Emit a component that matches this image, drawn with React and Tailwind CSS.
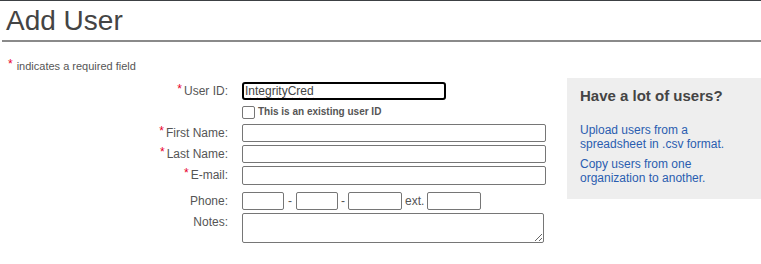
import React from 'react'

const Req = () => <span className="text-[#e8002a] text-[12px] mr-[2px] relative top-[-2px]">*</span>

const Field = ({ label, required, children, className = '' }) => (
  <>
    <div className={`text-right text-[12px] text-[#555] leading-[18px] ${className}`}>
      {required && <Req />}
      {label}
    </div>
    <div className={className}>{children}</div>
  </>
)

const inputCls =
  'block h-[18px] border border-[#767676] rounded-[2px] bg-white text-[12px] px-[1px] outline-none'

export default function App() {
  return (
    <div className="w-[761px] h-[264px] bg-white border-t border-[#3c4043] font-['Liberation_Sans',Arial,sans-serif] text-[#444] overflow-hidden">
      <h1 className="text-[28px] leading-[34px] pl-[4px] pt-[3px] text-[#444] border-b-2 border-[#8a8a8a] ml-[2px] pb-[2px]">
        Add User
      </h1>

      <div className="flex mt-[17px]">
        <div className="w-[567px]">
          <p className="text-[11px] text-[#555] pl-[8px] leading-[14px]">
            <span className="text-[#e8002a] text-[12px] relative top-[-2px] mr-[4px]">*</span>
            indicates a required field
          </p>

          <div className="grid grid-cols-[228px_auto] gap-x-[14px] mt-[9px] items-start">
            <Field label="User ID:" required>
              <input
                defaultValue="IntegrityCred"
                spellCheck
                className="block w-[204px] h-[18px] border-2 border-black rounded-[3px] text-[12px] px-[1px] outline-none underline decoration-wavy decoration-[#e53935] decoration-[1px] underline-offset-2"
              />
            </Field>

            <div />
            <label className="flex items-center gap-[3px] mt-[5px] text-[10px] font-bold text-[#555] leading-[14px]">
              <span className="inline-block w-[13px] h-[13px] border border-[#767676] rounded-[2px] bg-white" />
              This is an existing user ID
            </label>

            <Field label="First Name:" required className="mt-[5px]">
              <input className={`${inputCls} w-[304px]`} />
            </Field>
            <Field label="Last Name:" required className="mt-[3px]">
              <input className={`${inputCls} w-[304px]`} />
            </Field>
            <Field label="E-mail:" required className="mt-[3px]">
              <input className={`${inputCls} w-[304px] h-[19px]`} />
            </Field>

            <Field label="Phone:" className="mt-[7px]">
              <div className="flex items-center text-[12px] text-[#555]">
                <input className={`${inputCls} w-[42px]`} />
                <span className="w-[12px] text-center">-</span>
                <input className={`${inputCls} w-[42px]`} />
                <span className="w-[10px] text-center">-</span>
                <input className={`${inputCls} w-[54px]`} />
                <span className="px-[3px]">ext.</span>
                <input className={`${inputCls} w-[54px]`} />
              </div>
            </Field>
            <Field label="Notes:" className="mt-[3px]">
              <textarea className="block w-[302px] h-[30px] border border-[#767676] rounded-[2px] outline-none text-[12px]" />
            </Field>
          </div>
        </div>

        <div className="flex-1 h-[121px] bg-[#eeeeee] mt-[19px] pl-[13px] pt-[8px]">
          <h2 className="text-[15px] font-bold text-[#444] leading-[20px]">Have a lot of users?</h2>
          <div className="mt-[17px] text-[12px] leading-[14px] text-[#2a5db0]">
            <a className="block">
              Upload users from a
              <br />
              spreadsheet in .csv format.
            </a>
            <a className="block mt-[6px]">
              Copy users from one
              <br />
              organization to another.
            </a>
          </div>
        </div>
      </div>
    </div>
  )
}
